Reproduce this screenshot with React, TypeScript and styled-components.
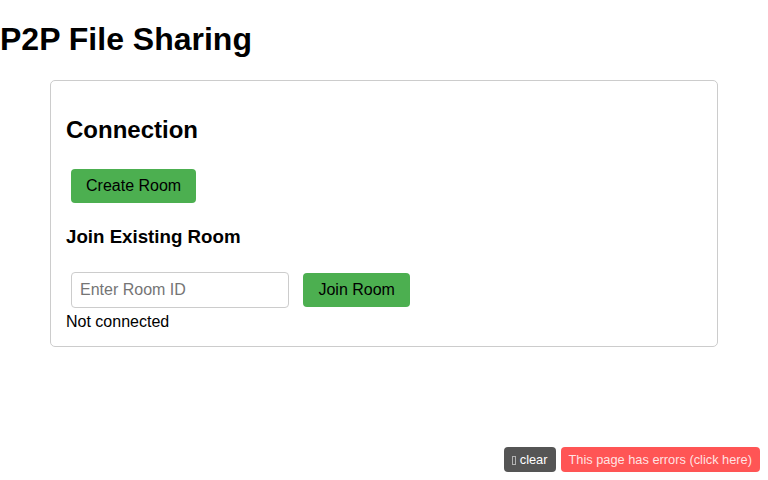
import styled, { createGlobalStyle } from "styled-components";

const GlobalStyle = createGlobalStyle`
  body {
    margin: 0;
    font-family: "Liberation Sans", Arial, sans-serif;
    color: #000;
    background: #fff;
  }
`;

const Title = styled.h1`
  font-size: 32px;
  margin: 21.44px 0;
`;

const Card = styled.section`
  margin: 0 50px;
  padding: 15px;
  border: 1px solid #ccc;
  border-radius: 5px;
`;

const Heading = styled.h2`
  font-size: 24px;
  margin: 19.92px 0;
`;

const SubHeading = styled.h3`
  font-size: 18.72px;
  margin: 18.72px 0;
`;

const Button = styled.button`
  margin: 5px;
  padding: 8px 15px;
  border: none;
  border-radius: 4px;
  background: #4caf50;
  color: #000;
  font-family: inherit;
  font-size: 16px;
  line-height: 18px;
  cursor: pointer;
`;

const JoinRow = styled.div`
  display: flex;
  align-items: center;
  gap: 4.45px;
`;

const RoomInput = styled.input`
  box-sizing: border-box;
  width: 218px;
  height: 36px;
  margin: 5px;
  padding: 8px;
  border: 1px solid #ccc;
  border-radius: 4px;
  font-family: inherit;
  font-size: 16px;

  &::placeholder {
    color: #757575;
  }
`;

const Status = styled.div`
  font-size: 16px;
`;

const DevBar = styled.div`
  position: fixed;
  right: 8px;
  bottom: 8px;
  display: flex;
  gap: 5px;
`;

const DevButton = styled.button<{ $error?: boolean }>`
  height: 25px;
  padding: 0 8px;
  border: none;
  border-radius: 4px;
  background: ${(props) => (props.$error ? "#ff5555" : "#555555")};
  color: ${(props) => (props.$error ? "rgba(255, 255, 255, 0.85)" : "#fff")};
  font-family: inherit;
  font-size: 12.8px;
  cursor: pointer;
`;

const MissingGlyph = styled.span`
  display: inline-block;
  box-sizing: border-box;
  width: 4.5px;
  height: 9px;
  border: 1px solid rgba(255, 255, 255, 0.55);
  vertical-align: -0.5px;
`;

const App = () => {
  return (
    <>
      <GlobalStyle />
      <Title>P2P File Sharing</Title>
      <Card>
        <Heading>Connection</Heading>
        <Button>Create Room</Button>
        <SubHeading>Join Existing Room</SubHeading>
        <JoinRow>
          <RoomInput placeholder="Enter Room ID" />
          <Button>Join Room</Button>
        </JoinRow>
        <Status>Not connected</Status>
      </Card>
      <DevBar>
        <DevButton>
          <MissingGlyph /> clear
        </DevButton>
        <DevButton $error>This page has errors (click here)</DevButton>
      </DevBar>
    </>
  );
};

export default App;
